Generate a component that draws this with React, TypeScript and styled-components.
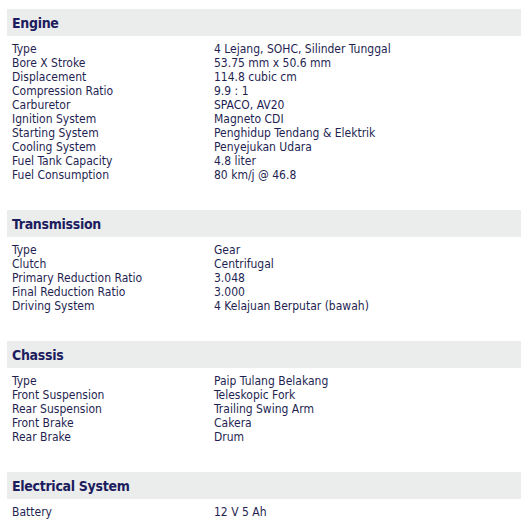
import { Fragment } from "react";
import styled, { createGlobalStyle } from "styled-components";

const GlobalStyle = createGlobalStyle`
  body {
    margin: 0;
    background: #ffffff;
    font-family: "DejaVu Sans Condensed", "DejaVu Sans", Tahoma, sans-serif;
  }
`;

const Page = styled.div`
  width: 514px;
  padding: 9px 0 0 7px;
`;

const Section = styled.section`
  margin-bottom: 28px;
`;

const SectionHeader = styled.h3`
  margin: 0;
  height: 27px;
  padding: 0 5px;
  display: flex;
  align-items: center;
  background-color: #ebecec;
  color: #1c1c5e;
  font-size: 14px;
  letter-spacing: -0.3px;
  font-weight: bold;
`;

const SpecList = styled.dl`
  margin: 6px 0 0;
  padding-left: 5px;
  display: grid;
  grid-template-columns: 202px 1fr;
  font-size: 12px;
  line-height: 14px;
  color: #1f1f52;
`;

const Label = styled.dt`
  margin: 0;
`;

const Value = styled.dd`
  margin: 0;
`;

interface Spec {
  label: string;
  value: string;
}

interface SpecSection {
  title: string;
  specs: Spec[];
}

const sections: SpecSection[] = [
  {
    title: "Engine",
    specs: [
      { label: "Type", value: "4 Lejang, SOHC, Silinder Tunggal" },
      { label: "Bore X Stroke", value: "53.75 mm x 50.6 mm" },
      { label: "Displacement", value: "114.8 cubic cm" },
      { label: "Compression Ratio", value: "9.9 : 1" },
      { label: "Carburetor", value: "SPACO, AV20" },
      { label: "Ignition System", value: "Magneto CDI" },
      { label: "Starting System", value: "Penghidup Tendang & Elektrik" },
      { label: "Cooling System", value: "Penyejukan Udara" },
      { label: "Fuel Tank Capacity", value: "4.8 liter" },
      { label: "Fuel Consumption", value: "80 km/j @ 46.8" },
    ],
  },
  {
    title: "Transmission",
    specs: [
      { label: "Type", value: "Gear" },
      { label: "Clutch", value: "Centrifugal" },
      { label: "Primary Reduction Ratio", value: "3.048" },
      { label: "Final Reduction Ratio", value: "3.000" },
      { label: "Driving System", value: "4 Kelajuan Berputar (bawah)" },
    ],
  },
  {
    title: "Chassis",
    specs: [
      { label: "Type", value: "Paip Tulang Belakang" },
      { label: "Front Suspension", value: "Teleskopic Fork" },
      { label: "Rear Suspension", value: "Trailing Swing Arm" },
      { label: "Front Brake", value: "Cakera" },
      { label: "Rear Brake", value: "Drum" },
    ],
  },
  {
    title: "Electrical System",
    specs: [{ label: "Battery", value: "12 V 5 Ah" }],
  },
];

export default function App() {
  return (
    <>
      <GlobalStyle />
      <Page>
        {sections.map((section) => (
          <Section key={section.title}>
            <SectionHeader>{section.title}</SectionHeader>
            <SpecList>
              {section.specs.map((spec) => (
                <Fragment key={spec.label}>
                  <Label>{spec.label}</Label>
                  <Value>{spec.value}</Value>
                </Fragment>
              ))}
            </SpecList>
          </Section>
        ))}
      </Page>
    </>
  );
}
